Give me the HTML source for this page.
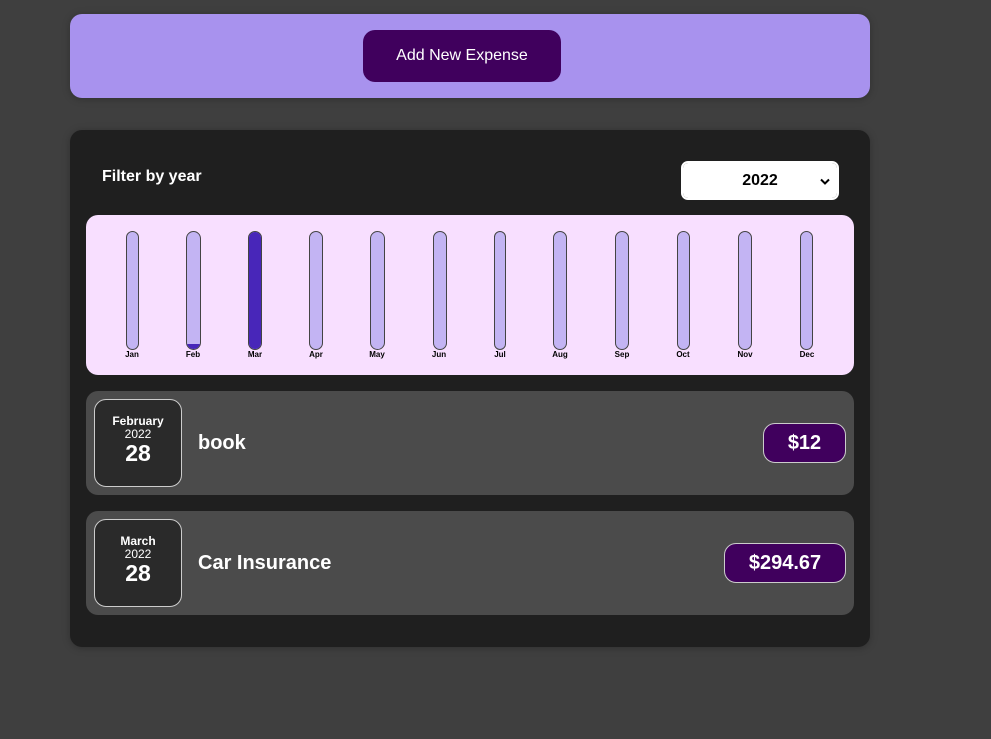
<!DOCTYPE html>
<html><head><meta charset="utf-8"><style>
*{box-sizing:border-box;margin:0;padding:0}
body{width:991px;height:739px;background:#3f3f3f;font-family:"Liberation Sans",Arial,sans-serif;position:relative;overflow:hidden}
.abs{position:absolute}
.top{left:70px;top:14px;width:800px;height:84px;background:#a892ee;border-radius:12px;box-shadow:0 1px 8px rgba(0,0,0,.25)}
.btn{left:363px;top:30px;width:198px;height:52px;background:#40005d;border-radius:12px;color:#fff;font-size:16px;display:flex;align-items:center;justify-content:center}
.panel{left:70px;top:130px;width:800px;height:517px;background:#1f1f1f;border-radius:12px;box-shadow:0 1px 8px rgba(0,0,0,.25)}
.filt{left:102px;top:168px;color:#fff;font-weight:bold;font-size:16px}
.sel{left:681px;top:161px;width:158px;height:39px;background:#fff;border:2px solid #1f1f1f;outline:2px solid #fff;outline-offset:-2px;border-radius:7px;font-weight:bold;font-size:16px;color:#000;display:flex;align-items:center;justify-content:center}
.sel svg{position:absolute;right:7px;top:15px}
.chart{left:86px;top:215px;width:768px;height:160px;background:#f8dfff;border-radius:12px}
.bar{position:absolute;top:231px;height:119px;border:1px solid #444;border-radius:10px;background:#c3b4f3;overflow:hidden}
.bar i{position:absolute;left:0;right:0;bottom:0;background:#4826b9}
.lbl{position:absolute;top:350px;width:40px;text-align:center;font-size:8px;font-weight:bold;color:#000}
.item{left:86px;width:768px;height:104px;background:#4b4b4b;border-radius:12px}
.date{left:94px;width:88px;height:88px;background:#2a2a2a;border:1px solid #ccc;border-radius:12px;color:#fff;text-align:center}
.date .m{font-size:12px;font-weight:bold;margin-top:15px;line-height:13px}
.date .y{font-size:12px;line-height:13px}
.date .d{font-size:23px;font-weight:bold;line-height:24px}
.title{left:198px;color:#fff;font-weight:bold;font-size:20px}
.amt{height:40px;background:#40005d;border:1px solid #ccc;border-radius:12px;color:#fff;font-weight:bold;font-size:20px;display:flex;align-items:center;justify-content:center}
</style></head><body>
<div class="abs top"></div>
<div class="abs btn">Add New Expense</div>
<div class="abs panel"></div>
<div class="abs filt">Filter by year</div>
<div class="abs sel">2022<svg width="10" height="7" viewBox="0 0 10 7"><path d="M1 1.5L5 5.5L9 1.5" stroke="#000" stroke-width="2" fill="none"/></svg></div>
<div class="abs chart"></div>
<div class="bar" style="left:126px;width:13px"></div>
<div class="bar" style="left:186px;width:15px"><i style="height:5px"></i></div>
<div class="bar" style="left:248px;width:14px"><i style="height:100%"></i></div>
<div class="bar" style="left:309px;width:14px"></div>
<div class="bar" style="left:370px;width:15px"></div>
<div class="bar" style="left:433px;width:14px"></div>
<div class="bar" style="left:494px;width:12px"></div>
<div class="bar" style="left:553px;width:14px"></div>
<div class="bar" style="left:615px;width:14px"></div>
<div class="bar" style="left:677px;width:13px"></div>
<div class="bar" style="left:738px;width:14px"></div>
<div class="bar" style="left:800px;width:13px"></div>
<div class="lbl" style="left:112px">Jan</div>
<div class="lbl" style="left:173px">Feb</div>
<div class="lbl" style="left:235px">Mar</div>
<div class="lbl" style="left:296px">Apr</div>
<div class="lbl" style="left:357px">May</div>
<div class="lbl" style="left:419px">Jun</div>
<div class="lbl" style="left:480px">Jul</div>
<div class="lbl" style="left:540px">Aug</div>
<div class="lbl" style="left:602px">Sep</div>
<div class="lbl" style="left:663px">Oct</div>
<div class="lbl" style="left:725px">Nov</div>
<div class="lbl" style="left:787px">Dec</div>

<div class="abs item" style="top:391px"></div>
<div class="abs date" style="top:399px"><div class="m">February</div><div class="y">2022</div><div class="d">28</div></div>
<div class="abs title" style="top:432px">book</div>
<div class="abs amt" style="left:763px;top:423px;width:83px">$12</div>

<div class="abs item" style="top:511px"></div>
<div class="abs date" style="top:519px"><div class="m">March</div><div class="y">2022</div><div class="d">28</div></div>
<div class="abs title" style="top:552px">Car Insurance</div>
<div class="abs amt" style="left:724px;top:543px;width:122px">$294.67</div>
</body></html>
